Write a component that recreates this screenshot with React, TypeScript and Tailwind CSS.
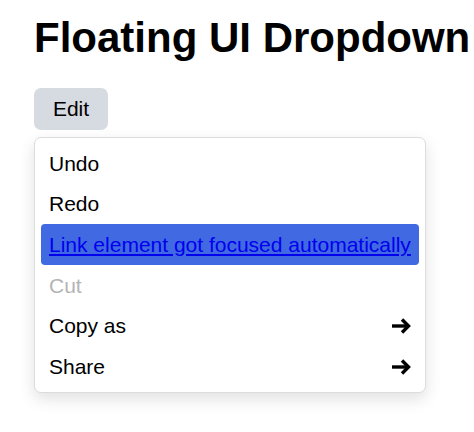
function ArrowRight() {
  return (
    <svg width="19" height="16" viewBox="0 0 19 16" fill="none" stroke="currentColor" strokeWidth="3.4">
      <path d="M0 8H16" />
      <path d="M10 1.5L16.5 8L10 14.5" strokeLinejoin="miter" />
    </svg>
  )
}

export default function App() {
  const items = [
    { label: "Undo" },
    { label: "Redo" },
    { label: "Link element got focused automatically", link: true },
    { label: "Cut", disabled: true },
    { label: "Copy as", sub: true },
    { label: "Share", sub: true },
  ]

  return (
    <main className="min-h-[432px] bg-white pl-[34px] pt-[14px] font-['Liberation_Sans',Arial,sans-serif] text-black">
      <h1 className="text-[42px] leading-[48px] font-bold whitespace-nowrap">Floating UI Dropdown</h1>
      <button className="mt-[26px] flex h-[42px] w-[74px] items-center justify-center rounded-[7px] bg-[#d6dae1] text-[21px]">
        Edit
      </button>
      <div className="mt-[7px] w-[392px] rounded-[7px] border border-[#dcdcdc] bg-white px-[6px] py-[5px] shadow-[0_6px_16px_rgba(0,0,0,0.12)]">
        {items.map((item) => (
          <div
            key={item.label}
            className={
              item.link
                ? "flex h-[40.7px] items-center justify-between rounded-[4px] bg-[#4169e1] px-[8px] text-[21px]"
                : "flex h-[40.7px] items-center justify-between pl-[8px] pr-[8px] text-[21px]"
            }
          >
            {item.link ? (
              <a href="#" className="text-[#0000ee] underline whitespace-nowrap">
                {item.label}
              </a>
            ) : (
              <span className={item.disabled ? "text-[#b4b4b4]" : ""}>{item.label}</span>
            )}
            {item.sub && <ArrowRight />}
          </div>
        ))}
      </div>
    </main>
  )
}
